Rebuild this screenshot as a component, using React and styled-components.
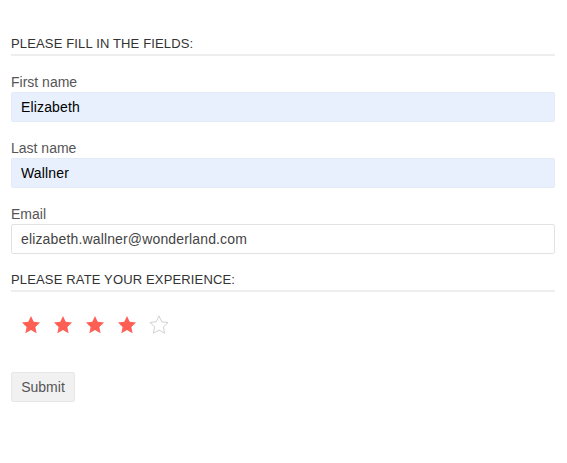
import React, { useState } from "react";
import styled, { createGlobalStyle } from "styled-components";

const GlobalStyle = createGlobalStyle`
  body {
    margin: 0;
    background: #fff;
    font-family: "Liberation Sans", Arial, sans-serif;
  }
`;

const Form = styled.form`
  width: 544px;
  padding: 36px 12px 0 11px;
  display: flex;
  flex-direction: column;
`;

const SectionTitle = styled.h2`
  margin: 0;
  font-size: 13px;
  line-height: 16px;
  font-weight: normal;
  letter-spacing: 0.15px;
  color: #333;
  text-transform: uppercase;
  padding-bottom: 2px;
  border-bottom: 2px solid #eee;
`;

const Field = styled.label`
  display: flex;
  flex-direction: column;
  gap: 2px;
  margin-top: 18px;
`;

const LabelText = styled.span`
  font-size: 14px;
  line-height: 16px;
  color: #555;
`;

const Input = styled.input`
  box-sizing: border-box;
  height: 30px;
  width: 100%;
  padding: 0 9px;
  font-family: inherit;
  font-size: 14px;
  letter-spacing: 0.15px;
  color: ${({ filled }) => (filled ? "#000" : "#444")};
  background: ${({ filled }) => (filled ? "#e8f0fe" : "#fff")};
  border: 1px solid ${({ filled }) => (filled ? "#e3ebf8" : "#e2e2e2")};
  border-radius: 2px;
  outline: none;
`;

const RatingTitle = styled(SectionTitle)`
  margin-top: 18px;
`;

const Stars = styled.div`
  display: flex;
  gap: 12px;
  padding-left: 10px;
  margin-top: 23px;
`;

const StarButton = styled.span`
  display: flex;
  width: 20px;
  height: 20px;
  cursor: pointer;
`;

const SubmitButton = styled.button`
  align-self: flex-start;
  margin-top: 37px;
  width: 64px;
  height: 30px;
  font-family: inherit;
  font-size: 14px;
  color: #555;
  background: #f1f1f1;
  border: 1px solid #e6e6e6;
  border-radius: 2px;
  cursor: pointer;
`;

const STAR =
  "10,0 12.82,6.12 19.51,6.91 14.57,11.48 15.88,18.09 10,14.8 4.12,18.09 5.43,11.48 0.49,6.91 7.18,6.12";

const Star = ({ on, onClick }) => (
  <StarButton onClick={onClick}>
    <svg width="20" height="20" viewBox="-0.5 -0.5 21 20">
      {on ? (
        <polygon points={STAR} fill="#fe5f55" />
      ) : (
        <polygon points={STAR} fill="none" stroke="#cfcfcf" strokeWidth="1" />
      )}
    </svg>
  </StarButton>
);

export default function App() {
  const [rating, setRating] = useState(4);

  return (
    <>
      <GlobalStyle />
      <Form onSubmit={(e) => e.preventDefault()}>
        <SectionTitle>Please fill in the fields:</SectionTitle>
        <Field>
          <LabelText>First name</LabelText>
          <Input filled defaultValue="Elizabeth" />
        </Field>
        <Field>
          <LabelText>Last name</LabelText>
          <Input filled defaultValue="Wallner" />
        </Field>
        <Field>
          <LabelText>Email</LabelText>
          <Input defaultValue="elizabeth.wallner@wonderland.com" />
        </Field>
        <RatingTitle>Please rate your experience:</RatingTitle>
        <Stars>
          {[1, 2, 3, 4, 5].map((n) => (
            <Star key={n} on={n <= rating} onClick={() => setRating(n)} />
          ))}
        </Stars>
        <SubmitButton type="submit">Submit</SubmitButton>
      </Form>
    </>
  );
}
